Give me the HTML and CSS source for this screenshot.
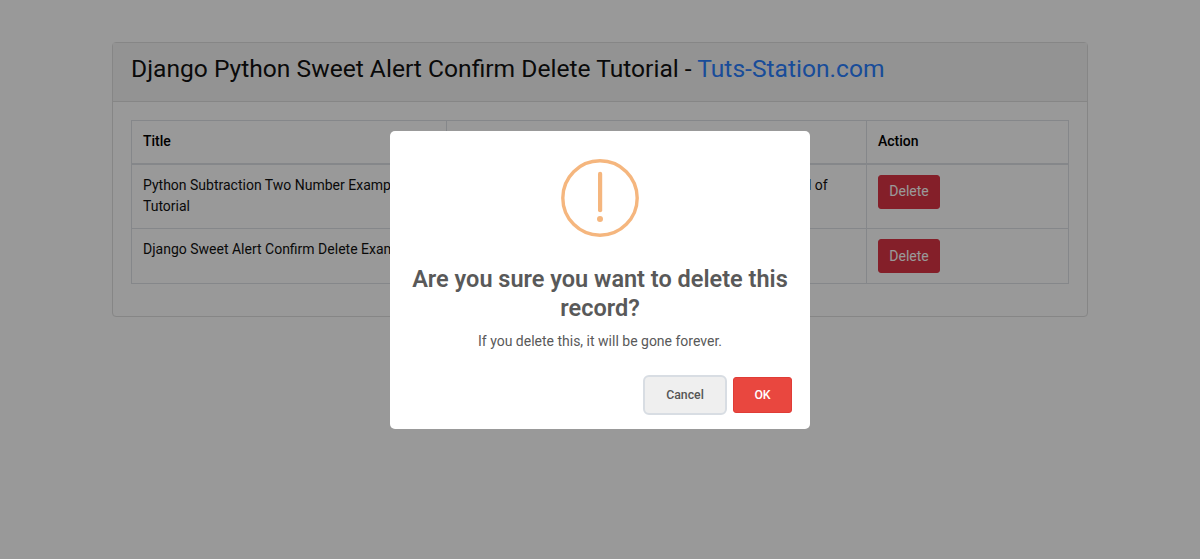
FILE: index.html
```html
<!DOCTYPE html>
<html lang="en">
<head>
<meta charset="utf-8">
<title>Sweet Alert</title>
<link rel="stylesheet" href="styles.css">
</head>
<body>
<div class="container">
  <div class="card">
    <div class="card-header"><h3 class="heading">Django Python Sweet Alert Confirm Delete Tutorial - <span class="brand">Tuts-Station.com</span></h3></div>
    <div class="card-body">
      <table class="data">
        <thead>
          <tr><th class="c1">Title</th><th class="c2">Body</th><th class="c3">Action</th></tr>
        </thead>
        <tbody>
          <tr class="tall"><td>Python Subtraction Two Number Example Tutorial</td><td>Hi Devs, In this example, you will learn how to subtract all of numbers in python</td><td><button class="del">Delete</button></td></tr>
          <tr><td>Django Sweet Alert Confirm Delete Example</td><td>Django sweet alert delete tutorial</td><td><button class="del">Delete</button></td></tr>
        </tbody>
      </table>
    </div>
  </div>
</div>
<div class="overlay">
  <div class="modal">
    <svg class="warn" width="78" height="78" viewBox="0 0 78 78" aria-hidden="true">
      <circle cx="39" cy="39" r="37.2" fill="none" stroke="#f5b67e" stroke-width="3.4"/>
      <rect x="37" y="12.7" width="4.2" height="40.6" rx="2.1" fill="#f5b67e"/>
      <circle cx="39" cy="60" r="3" fill="#f5b67e"/>
    </svg>
    <h2 class="m-title">Are you sure you want to delete this record?</h2>
    <p class="m-text">If you delete this, it will be gone forever.</p>
    <div class="m-actions">
      <button class="m-cancel">Cancel</button>
      <button class="m-ok">OK</button>
    </div>
  </div>
</div>
</body>
</html>
```
FILE: styles.css
```css
* { box-sizing: border-box; }
html, body { margin: 0; height: 100%; }
body { font-family: Roboto, sans-serif; font-size: 14px; line-height: 21px; color: #111; background: #fff; overflow: hidden; }
.container { width: 1200px; padding: 42px 112px 0; }
.card { border: 1px solid #dfdfdf; border-radius: 4px; height: 275px; }
.card-header { height: 59px; background: #f6f6f6; border-bottom: 1px solid #dfdfdf; padding: 0 18px 7px; display: flex; align-items: center; }
.heading { margin: 0; font-size: 24.6px; font-weight: 400; line-height: 40px; color: #111; }
.brand { color: #2a7fff; }
.card-body { padding: 18px; }
.data { width: 100%; border-collapse: collapse; table-layout: fixed; }
.data th, .data td { border: 1px solid #dee2e6; padding: 10px 10px 10px 11px; text-align: left; vertical-align: top; }
.data th { font-weight: 500; border-bottom-width: 2px; height: 43px; color: #000; }
.c1 { width: 315px; }
.c2 { width: 420px; }
.tall td { height: 65px; }
.del { display: block; width: 62px; height: 34px; background: #dc3545; color: #fff; border: 1px solid #dc3545; border-radius: 3px; font: 14px/21px Roboto, sans-serif; padding: 0; }
.overlay { position: fixed; inset: 0; background: rgba(0,0,0,0.4); display: flex; justify-content: center; align-items: flex-start; padding-top: 131px; }
.modal { width: 420px; height: 298px; background: #fff; border-radius: 5px; padding-top: 28px; display: flex; flex-direction: column; align-items: center; }
.warn { display: block; }
.m-title { margin: 28px 0 0; width: 390px; text-align: center; font-size: 23.5px; line-height: 29px; font-weight: 600; color: #595959; }
.m-text { margin: 8px 0 0; color: #595959; font-size: 14px; line-height: 21px; }
.m-actions { align-self: flex-end; margin: 23px 18px 0 0; display: flex; gap: 6px; align-items: center; }
.m-cancel { width: 84px; height: 40px; background: #efefef; color: #555; border: 2px solid #d8dde3; border-radius: 6px; font: 500 12.3px Roboto, sans-serif; }
.m-ok { width: 59px; height: 36px; background: #e9473f; color: #fff; border: 1px solid #e03c36; border-radius: 3px; font: 500 12.3px Roboto, sans-serif; }
```
